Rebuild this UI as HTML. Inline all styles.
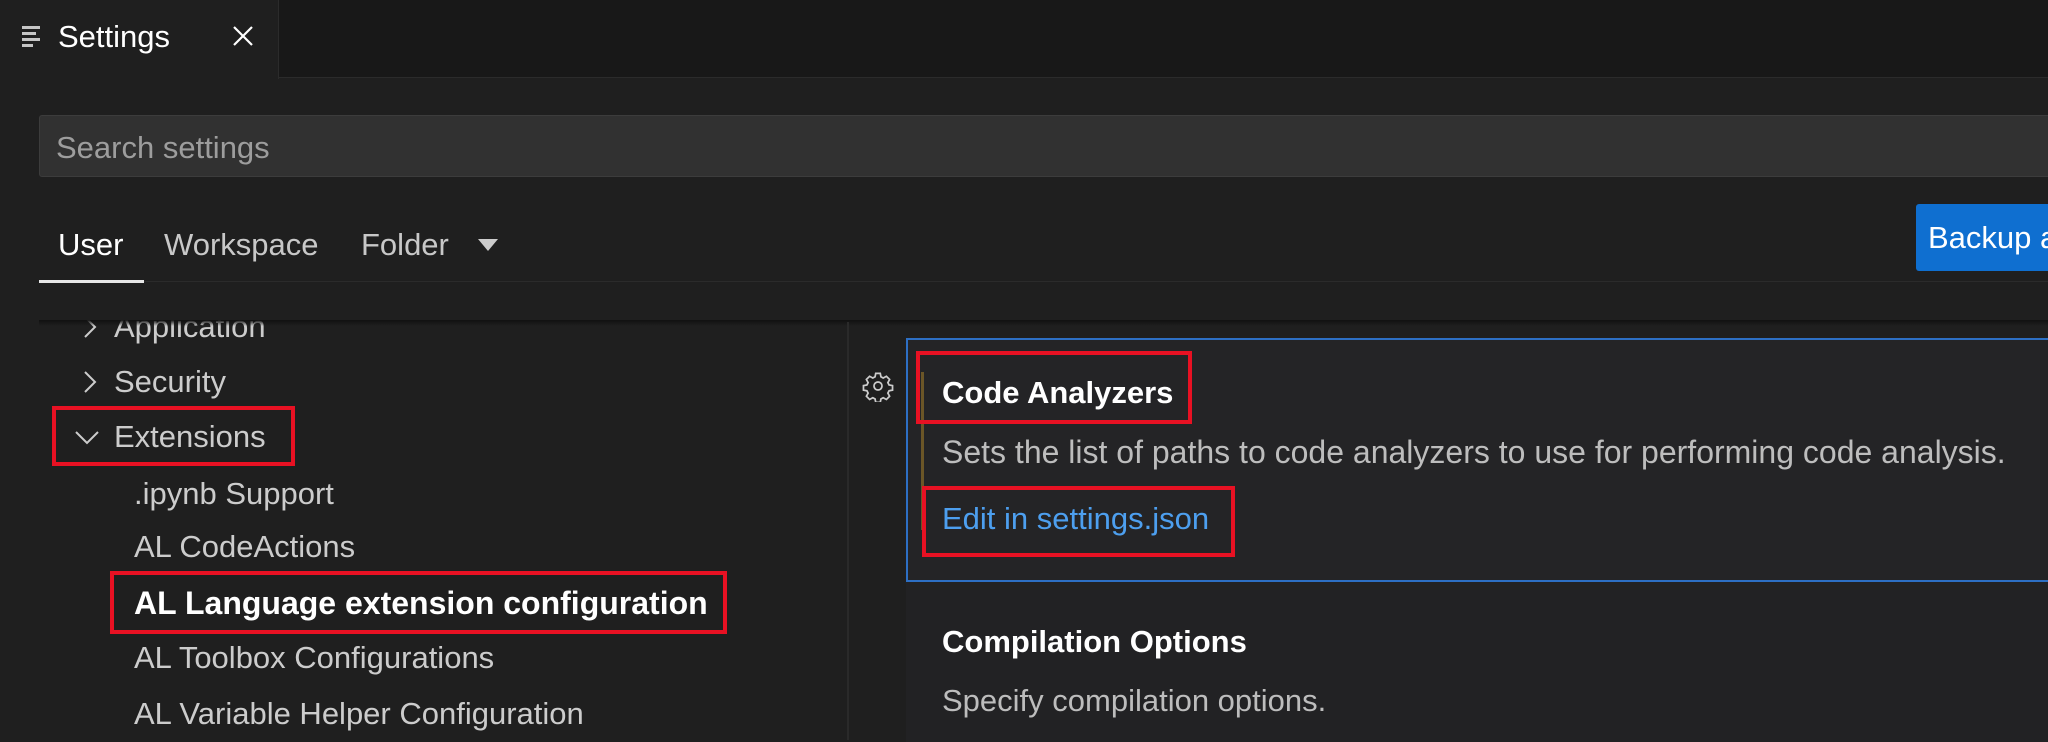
<!DOCTYPE html>
<html><head><meta charset="utf-8"><style>
*{margin:0;padding:0;box-sizing:border-box}
body{width:2048px;height:740px;overflow:hidden;background:#1f1f1f;font-family:"Liberation Sans",sans-serif;color:#cccccc;position:relative}
.a{position:absolute;white-space:nowrap;line-height:40px;font-size:31px;letter-spacing:0}
.red{position:absolute;border:4px solid #e81123}
</style></head><body>
<div style="position:absolute;left:0;top:0;width:2048px;height:78px;background:#181818;border-bottom:1px solid #2b2b2b"></div>
<div style="position:absolute;left:0;top:0;width:279px;height:79px;background:#1f1f1f;border-right:1px solid #2b2b2b"></div>
<svg style="position:absolute;left:20px;top:24px" width="24" height="26" viewBox="0 0 24 26"><g fill="#c5c5c5"><rect x="2" y="2" width="18" height="3"/><rect x="2" y="8" width="14" height="3"/><rect x="2" y="14" width="18" height="3"/><rect x="2" y="20" width="11" height="3"/></g></svg>
<div class="a" style="left:58px;top:17px;color:#fff">Settings</div>
<svg style="position:absolute;left:232px;top:25px" width="22" height="22" viewBox="0 0 22 22"><path d="M2 2L20 20M20 2L2 20" stroke="#fff" stroke-width="2.2"/></svg>
<div style="position:absolute;left:39px;top:115px;width:2020px;height:62px;background:#313131;border:1px solid #3c3c3c;border-radius:3px"></div>
<div class="a" style="left:56px;top:128px;color:#9d9d9d">Search settings</div>
<div class="a" style="left:58px;top:225px;color:#fff">User</div>
<div class="a" style="left:164px;top:225px;color:#c8c8c8">Workspace</div>
<div class="a" style="left:361px;top:225px;color:#c8c8c8">Folder</div>
<svg style="position:absolute;left:476px;top:237px" width="24" height="16"><path d="M2 2H22L12 14Z" fill="#cccccc"/></svg>
<div style="position:absolute;left:39px;top:281px;width:2020px;height:1px;background:#2b2b2b"></div>
<div style="position:absolute;left:39px;top:280px;width:105px;height:3px;background:#e7e7e7"></div>
<div style="position:absolute;left:1916px;top:204px;width:140px;height:67px;background:#0f6fd0;border-radius:3px"></div>
<div class="a" style="left:1928px;top:218px;color:#fff">Backup a</div>
<div class="a" style="left:114px;top:307px">Application</div>
<svg style="position:absolute;left:80px;top:315px" width="20" height="24"><path d="M5 2L15 12L5 22" stroke="#ccc" stroke-width="2" fill="none"/></svg>
<div style="position:absolute;left:39px;top:300px;width:2009px;height:20px;background:#1f1f1f"></div>
<div style="position:absolute;left:39px;top:320px;width:2009px;height:6px;background:linear-gradient(#111,#1f1f1f00)"></div>
<div style="position:absolute;left:847px;top:322px;width:2px;height:418px;background:#2a2a2a"></div>
<svg style="position:absolute;left:80px;top:370px" width="20" height="24"><path d="M5 2L15 12L5 22" stroke="#ccc" stroke-width="2" fill="none"/></svg>
<div class="a" style="left:114px;top:362px">Security</div>
<svg style="position:absolute;left:74px;top:428px" width="26" height="20"><path d="M2 4L13 15L24 4" stroke="#ccc" stroke-width="2" fill="none"/></svg>
<div class="a" style="left:114px;top:417px">Extensions</div>
<div class="red" style="left:52px;top:406px;width:243px;height:60px"></div>
<div class="a" style="left:134px;top:474px">.ipynb Support</div>
<div class="a" style="left:134px;top:527px">AL CodeActions</div>
<div class="a" style="left:134px;top:583px;color:#fff;font-weight:bold;font-size:32px">AL Language extension configuration</div>
<div class="red" style="left:110px;top:571px;width:617px;height:63px"></div>
<div class="a" style="left:134px;top:638px">AL Toolbox Configurations</div>
<div class="a" style="left:134px;top:694px">AL Variable Helper Configuration</div>
<div style="position:absolute;left:906px;top:338px;width:1150px;height:244px;background:#242426;border:2px solid #2d6fc4"></div>
<div style="position:absolute;left:906px;top:582px;width:1150px;height:160px;background:#222224"></div>
<svg style="position:absolute;left:862px;top:370px" width="32" height="32" viewBox="0 0 24 24"><path fill="none" stroke="#cccccc" stroke-width="1.3" d="M10.3 2.5h3.4l.5 2.6 1.7.9 2.4-1.3 2.4 2.4-1.3 2.4.9 1.7 2.6.5v3.4l-2.6.5-.9 1.7 1.3 2.4-2.4 2.4-2.4-1.3-1.7.9-.5 2.6h-3.4l-.5-2.6-1.7-.9-2.4 1.3-2.4-2.4 1.3-2.4-.9-1.7-2.6-.5v-3.4l2.6-.5.9-1.7-1.3-2.4 2.4-2.4 2.4 1.3 1.7-.9z"/><circle cx="12" cy="12" r="3" fill="none" stroke="#cccccc" stroke-width="1.3"/></svg>
<div style="position:absolute;left:921px;top:372px;width:3px;height:158px;background:#6b5627"></div>
<div class="a" style="left:942px;top:373px;color:#fff;font-weight:bold">Code Analyzers</div>
<div class="red" style="left:916px;top:351px;width:276px;height:73px"></div>
<div class="a" style="left:942px;top:432px;color:#bdbdbd;font-size:32px">Sets the list of paths to code analyzers to use for performing code analysis.</div>
<div class="a" style="left:942px;top:499px;color:#4d9fef">Edit in settings.json</div>
<div class="red" style="left:922px;top:486px;width:313px;height:71px"></div>
<div class="a" style="left:942px;top:622px;color:#fff;font-weight:bold">Compilation Options</div>
<div class="a" style="left:942px;top:681px;color:#bdbdbd">Specify compilation options.</div>
</body></html>
